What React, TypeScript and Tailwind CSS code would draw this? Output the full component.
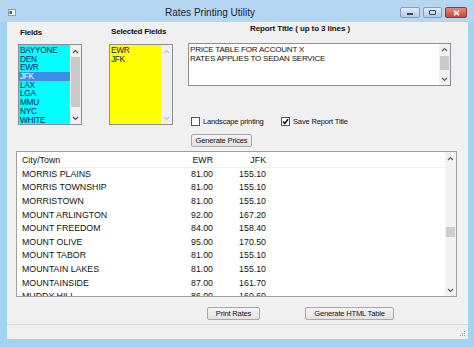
import React from "react";

const sans = "font-['Liberation_Sans',Arial,sans-serif]";

const fields = ["BAYYONE", "DEN", "EWR", "JFK", "LAX", "LGA", "MMU", "NYC", "WHITE"];
const selected = ["EWR", "JFK"];

const rows = [
  ["MORRIS PLAINS", "81.00", "155.10"],
  ["MORRIS TOWNSHIP", "81.00", "155.10"],
  ["MORRISTOWN", "81.00", "155.10"],
  ["MOUNT ARLINGTON", "92.00", "167.20"],
  ["MOUNT FREEDOM", "84.00", "158.40"],
  ["MOUNT OLIVE", "95.00", "170.50"],
  ["MOUNT TABOR", "81.00", "155.10"],
  ["MOUNTAIN LAKES", "81.00", "155.10"],
  ["MOUNTAINSIDE", "87.00", "161.70"],
  ["MUDDY HILL", "86.00", "160.60"],
];

function Chevron({ dir, color = "#606060" }: { dir: "up" | "down"; color?: string }) {
  return (
    <svg width="7" height="5" viewBox="0 0 7 5">
      <path
        d={dir === "up" ? "M1 4 L3.5 1.5 L6 4" : "M1 1 L3.5 3.5 L6 1"}
        fill="none"
        stroke={color}
        strokeWidth="1.2"
      />
    </svg>
  );
}

function TitleBar() {
  return (
    <div className="h-[22px] flex items-start bg-[#b4d6f0]">
      <div className="w-[20px] pl-[8px] pt-[9px]">
        <svg width="8" height="7" viewBox="0 0 8 7">
          <rect x="0.5" y="0.5" width="7" height="6" fill="#ffffff" stroke="#8a9bb0" />
          <rect x="1.5" y="2" width="2.5" height="3" fill="#4a5a70" />
        </svg>
      </div>
      <div className={`flex-1 text-center text-[10px] leading-[26px] text-[#1a2330] ${sans}`}>
        Rates Printing Utility
      </div>
      <div className="flex gap-[3px] pt-[7px] pr-[7px]">
        <div className="w-[20px] h-[11px] rounded-[2px] border border-[#7f9dbd] bg-gradient-to-b from-[#e3edf8] to-[#b3c9e1] flex items-end justify-center pb-[2px]">
          <div className="w-[6px] h-[2px] bg-[#334a66]" />
        </div>
        <div className="w-[19px] h-[11px] rounded-[2px] border border-[#7f9dbd] bg-gradient-to-b from-[#e3edf8] to-[#b3c9e1] flex items-center justify-center">
          <div className="w-[7px] h-[5px] rounded-[1px] border border-[#334a66]" />
        </div>
        <div className="w-[22px] h-[11px] rounded-[2px] border border-[#93362c] bg-gradient-to-b from-[#e38a78] to-[#c4473a] flex items-center justify-center">
          <svg width="7" height="6" viewBox="0 0 7 6">
            <path d="M1 0.8 L6 5.2 M6 0.8 L1 5.2" stroke="#ffffff" strokeWidth="1.6" />
          </svg>
        </div>
      </div>
    </div>
  );
}

function ListBox({ items, bg, highlight, disabled }: { items: string[]; bg: string; highlight?: number; disabled?: boolean }) {
  return (
    <div className="h-[81px] border border-[#8c8f96] bg-white flex">
      <div className={`flex-1 pt-[1px] ${bg} text-[8.3px] leading-[8.7px] tracking-[-0.3px] ${sans}`}>
        {items.map((it, i) => (
          <div
            key={it}
            className={i === highlight ? "h-[8.7px] pl-[1px] bg-[#3d8ee6] text-white" : "h-[8.7px] pl-[1px] text-[#101060]"}
          >
            {it}
          </div>
        ))}
      </div>
      <div className="w-[11px] flex flex-col bg-[#f0f0f0]">
        <div className="h-[12px] flex items-center justify-center">
          <Chevron dir="up" color={disabled ? "#c4c4c4" : "#505050"} />
        </div>
        <div className="flex-1 px-[1px]">
          {!disabled && <div className="h-[50px] bg-[#c9c9c9]" />}
        </div>
        <div className="h-[12px] flex items-center justify-center">
          <Chevron dir="down" color={disabled ? "#c4c4c4" : "#505050"} />
        </div>
      </div>
    </div>
  );
}

function CheckBox({ checked, label }: { checked?: boolean; label: string }) {
  return (
    <div className="flex items-center gap-[3px]">
      <div className="w-[9px] h-[9px] border border-[#555] bg-white flex items-center justify-center">
        {checked && (
          <svg width="7" height="7" viewBox="0 0 7 7">
            <path d="M1 3.5 L2.8 5.5 L6 1.2" fill="none" stroke="#111" strokeWidth="1.5" />
          </svg>
        )}
      </div>
      <span className={`whitespace-nowrap text-[7.6px] leading-[9px] tracking-[-0.2px] text-[#111] ${sans}`}>{label}</span>
    </div>
  );
}

function Button({ label, w }: { label: string; w: string }) {
  return (
    <div
      className={`${w} h-full whitespace-nowrap border border-[#a8a8a8] rounded-[2px] bg-gradient-to-b from-[#f4f4f4] to-[#e2e2e2] flex items-center justify-center text-[7.6px] tracking-[-0.2px] text-[#111] ${sans}`}
    >
      {label}
    </div>
  );
}

export default function App() {
  return (
    <div className="w-[474px] h-[347px] bg-[#a3d2f2] flex flex-col overflow-hidden">
      <TitleBar />
      <div className="ml-[7px] w-[461px] h-[317px] bg-[#f0f0f0] flex flex-col">
        <div className="h-[123px] flex items-start">
          <div className="ml-[11px] w-[64px]">
            <div className={`h-[22px] flex items-center pl-[2px] text-[8px] tracking-[-0.2px] font-bold text-[#111] ${sans}`}>
              Fields
            </div>
            <ListBox items={fields} bg="bg-[#00ffff]" highlight={3} />
          </div>
          <div className="ml-[27px] w-[64px]">
            <div className={`h-[20px] mb-[2px] flex items-center pl-[2px] whitespace-nowrap text-[8px] tracking-[-0.2px] font-bold text-[#111] ${sans}`}>
              Selected Fields
            </div>
            <ListBox items={selected} bg="bg-[#ffff00]" disabled />
          </div>
          <div className="ml-[15px] w-[263px]">
            <div className={`h-[14px] flex items-center pl-[62px] whitespace-nowrap text-[8px] tracking-[-0.1px] font-bold text-[#111] ${sans}`}>
              Report Title ( up to 3 lines )
            </div>
            <div className="mt-[7px] h-[43px] border border-[#8c8f96] bg-white flex">
              <div className={`flex-1 pl-[1px] pt-[1px] text-[8px] leading-[9px] tracking-[-0.2px] text-[#111] ${sans}`}>
                <div>PRICE TABLE FOR ACCOUNT X</div>
                <div>RATES APPLIES TO SEDAN SERVICE</div>
              </div>
              <div className="w-[11px] flex flex-col bg-[#f0f0f0]">
                <div className="h-[10px] flex items-center justify-center">
                  <Chevron dir="up" />
                </div>
                <div className="flex-1 px-[1px] pt-[2px]">
                  <div className="h-[14px] bg-[#c9c9c9]" />
                </div>
                <div className="h-[11px] flex items-center justify-center">
                  <Chevron dir="down" />
                </div>
              </div>
            </div>
            <div className="mt-[30px] h-[10px] pl-[3px] flex items-center">
              <div className="w-[90px]">
                <CheckBox label="Landscape printing" />
              </div>
              <CheckBox checked label="Save Report Title" />
            </div>
            <div className="mt-[8px] ml-[3px] h-[13px] flex">
              <Button label="Generate Prices" w="w-[61px]" />
            </div>
          </div>
        </div>

        <div className="mt-[6px] ml-[9px] w-[441px] h-[146px] border border-[#a0a0a0] bg-white flex overflow-hidden">
          <div className={`flex-1 pt-[2px] text-[8.8px] text-[#111] ${sans}`}>
            <div className="h-[13.6px] flex items-center border-b border-[#f0f0f0]">
              <div className="w-[150px] pl-[5px]">City/Town</div>
              <div className="w-[46px] text-right">EWR</div>
              <div className="w-[53px] text-right">JFK</div>
            </div>
            {rows.map((r) => (
              <div key={r[0]} className="h-[13.6px] flex items-center">
                <div className="w-[150px] pl-[5px]">{r[0]}</div>
                <div className="w-[46px] text-right">{r[1]}</div>
                <div className="w-[53px] text-right">{r[2]}</div>
              </div>
            ))}
          </div>
          <div className="w-[11px] flex flex-col bg-[#f2f2f2]">
            <div className="h-[12px] flex items-center justify-center">
              <Chevron dir="up" />
            </div>
            <div className="flex-1 px-[1px] pt-[63px]">
              <div className="h-[10px] bg-[#cdcdcd]" />
            </div>
            <div className="h-[12px] flex items-center justify-center">
              <Chevron dir="down" />
            </div>
          </div>
        </div>

        <div className="mt-[10px] h-[13px] flex">
          <div className="ml-[200px] flex">
            <Button label="Print Rates" w="w-[53px]" />
          </div>
          <div className="ml-[45px] flex">
            <Button label="Generate HTML Table" w="w-[89px]" />
          </div>
        </div>

        <div className="mt-[4px] flex-1 border-t border-[#d7d7d7] flex items-end justify-end pr-[2px] pb-[2px]">
          <svg width="7" height="7" viewBox="0 0 7 7">
            <rect x="5" y="1" width="1" height="1" fill="#a0a0a0" />
            <rect x="3" y="3" width="1" height="1" fill="#a0a0a0" />
            <rect x="5" y="3" width="1" height="1" fill="#a0a0a0" />
            <rect x="1" y="5" width="1" height="1" fill="#a0a0a0" />
            <rect x="3" y="5" width="1" height="1" fill="#a0a0a0" />
            <rect x="5" y="5" width="1" height="1" fill="#a0a0a0" />
          </svg>
        </div>
      </div>
    </div>
  );
}
